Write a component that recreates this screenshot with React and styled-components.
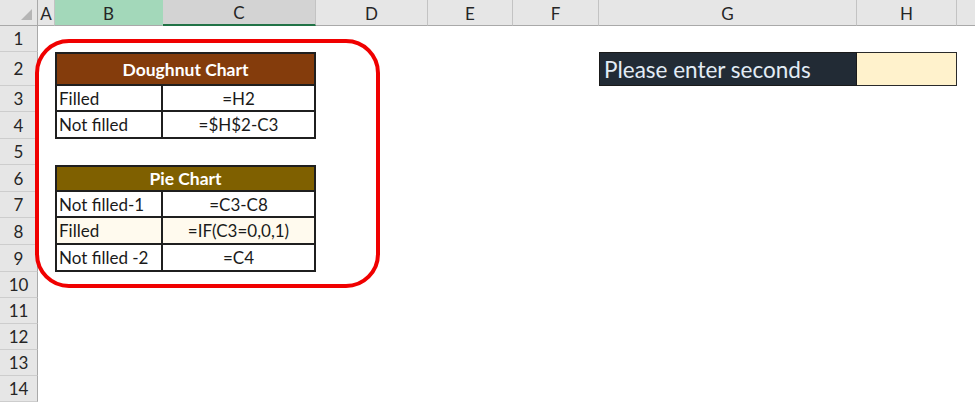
import React from "react";
import styled, { createGlobalStyle } from "styled-components";

const Global = createGlobalStyle`
  html, body { margin: 0; padding: 0; background: #fff; overflow: hidden; }
  body { font-family: Lato, "Noto Sans", sans-serif; }
`;

const COLS = ["A", "B", "C", "D", "E", "F", "G", "H", "I"];
const COL_W = [17, 108, 153, 112, 85, 86, 258, 100, 40];
const ROW_H = [26, 34, 26, 27, 26, 27, 26, 27, 27, 26, 26, 26, 26, 26];

const Sheet = styled.div`
  position: relative;
  display: grid;
  grid-template-columns: 38px ${COL_W.map((w) => w + "px").join(" ")};
  grid-template-rows: 26px ${ROW_H.map((h) => h + "px").join(" ")};
  width: 975px;
  height: 403px;
  overflow: hidden;
  background: #fff;
`;

const Corner = styled.div`
  grid-column: 1;
  grid-row: 1;
  position: relative;
  background: #e6e6e6;
  border-right: 1px solid #a9a9a9;
  border-bottom: 1px solid #a9a9a9;
  box-sizing: border-box;
  &::after {
    content: "";
    position: absolute;
    right: 5px;
    bottom: 5px;
    width: 0;
    height: 0;
    border-left: 11px solid transparent;
    border-bottom: 11px solid #b5b5b5;
  }
`;

const ColHeader = styled.div`
  grid-row: 1;
  grid-column: ${(p) => p.$col};
  display: flex;
  align-items: center;
  justify-content: center;
  box-sizing: border-box;
  font-size: 17px;
  color: #262626;
  background: ${(p) => (p.$state === "sel" ? "#a3d8ba" : p.$state === "act" ? "#d3d3d3" : "#e6e6e6")};
  border-right: 1px solid ${(p) => (p.$state === "sel" ? "#a3d8ba" : "#c3c3c3")};
  border-bottom: ${(p) => (p.$state === "act" ? "2px solid #217346" : "1px solid #a9a9a9")};
  padding-top: 1px;
`;

const RowHeader = styled.div`
  grid-column: 1;
  grid-row: ${(p) => p.$row};
  display: flex;
  align-items: center;
  justify-content: center;
  box-sizing: border-box;
  font-size: 17px;
  color: #262626;
  background: #e6e6e6;
  border-right: 1px solid #a9a9a9;
  border-bottom: 1px solid #cdcdcd;
`;

const TableHead = styled.div`
  grid-column: 3 / span 2;
  grid-row: ${(p) => p.$row};
  display: flex;
  align-items: center;
  justify-content: center;
  box-sizing: border-box;
  background: ${(p) => p.$bg};
  color: #fff;
  font-weight: 700;
  font-size: 17.5px;
  border: 2px solid #1f1f1f;
`;

const TableCell = styled.div`
  grid-column: ${(p) => p.$col};
  grid-row: ${(p) => p.$row};
  display: flex;
  align-items: center;
  justify-content: ${(p) => (p.$center ? "center" : "flex-start")};
  padding-left: ${(p) => (p.$center ? "0" : "2px")};
  box-sizing: border-box;
  background: ${(p) => p.$bg || "#fff"};
  color: #1a1a1a;
  font-size: 17px;
  white-space: nowrap;
  border-right: 2px solid #1f1f1f;
  border-bottom: 2px solid #1f1f1f;
  border-left: ${(p) => (p.$first ? "2px solid #1f1f1f" : "none")};
`;

const Prompt = styled.div`
  grid-column: 8;
  grid-row: 3;
  display: flex;
  align-items: center;
  box-sizing: border-box;
  padding-left: 4px;
  background: #222b35;
  color: #e3ecf5;
  font-size: 22.5px;
  white-space: nowrap;
  border: 1.5px solid #1a1a1a;
`;

const InputCell = styled.div`
  grid-column: 9;
  grid-row: 3;
  box-sizing: border-box;
  background: #fff2cc;
  border: 1.5px solid #2a2a2a;
  border-left: none;
`;

const Ring = styled.div`
  position: absolute;
  left: 35px;
  top: 39px;
  width: 345px;
  height: 249px;
  box-sizing: border-box;
  border: 4.5px solid #f00000;
  border-radius: 34px;
  pointer-events: none;
`;

export default function App() {
  const colState = { B: "sel", C: "act" };
  return (
    <>
      <Global />
      <Sheet>
        <Corner />
        {COLS.map((c, i) => (
          <ColHeader key={c} $col={i + 2} $state={colState[c]}>
            {c === "I" ? "" : c}
          </ColHeader>
        ))}
        {ROW_H.map((_, i) => (
          <RowHeader key={i} $row={i + 2}>
            {i + 1}
          </RowHeader>
        ))}

        <TableHead $row={3} $bg="#843c0c">Doughnut Chart</TableHead>
        <TableCell $row={4} $col={3} $first>Filled</TableCell>
        <TableCell $row={4} $col={4} $center>=H2</TableCell>
        <TableCell $row={5} $col={3} $first>Not filled</TableCell>
        <TableCell $row={5} $col={4} $center>=$H$2-C3</TableCell>

        <TableHead $row={7} $bg="#7f6000">Pie Chart</TableHead>
        <TableCell $row={8} $col={3} $first>Not filled-1</TableCell>
        <TableCell $row={8} $col={4} $center>=C3-C8</TableCell>
        <TableCell $row={9} $col={3} $first $bg="#fffaee">Filled</TableCell>
        <TableCell $row={9} $col={4} $center $bg="#fffaee">=IF(C3=0,0,1)</TableCell>
        <TableCell $row={10} $col={3} $first>Not filled -2</TableCell>
        <TableCell $row={10} $col={4} $center>=C4</TableCell>

        <Prompt>Please enter seconds</Prompt>
        <InputCell />

        <Ring />
      </Sheet>
    </>
  );
}
